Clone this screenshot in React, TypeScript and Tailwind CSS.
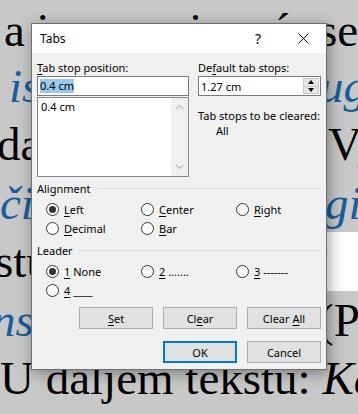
import type { ReactNode } from 'react'
import { clsx } from 'clsx'

function Radio({ checked, children }: { checked?: boolean; children: ReactNode }) {
  return (
    <div className="flex items-center h-[19px]">
      <span className="w-[13px] h-[13px] rounded-full border border-[#333] bg-white flex items-center justify-center shrink-0">
        {checked && <span className="w-[7px] h-[7px] rounded-full bg-[#333]" />}
      </span>
      <span className="ml-[5px] whitespace-pre">{children}</span>
    </div>
  )
}

function Btn({ children, primary }: { children: ReactNode; primary?: boolean }) {
  return (
    <div
      className={clsx(
        'w-[74px] h-[22px] flex items-center justify-center bg-[#e1e1e1]',
        primary ? 'border-2 border-[#0078d7]' : 'border border-[#adadad]'
      )}
    >
      <span className="whitespace-pre">{children}</span>
    </div>
  )
}

function U({ children }: { children: ReactNode }) {
  return <span className="underline decoration-1 underline-offset-[2px]">{children}</span>
}

function GroupLabel({ children }: { children: ReactNode }) {
  return (
    <div className="flex items-center h-[16px]">
      <span>{children}</span>
      <span className="flex-1 h-px bg-[#dcdcdc] ml-[6px]" />
    </div>
  )
}

export default function App() {
  return (
    <div className="relative w-[358px] h-[414px] overflow-hidden bg-[#c8c8c8]">
      {/* document text behind the dialog */}
      <div className="font-['Liberation_Serif',serif] text-[47px] leading-[58.5px] text-black whitespace-nowrap -mt-[2px]">
        <div className="flex pl-[4px] pt-[6px] h-[58.5px] leading-[52.5px]">
          <span className="w-[315px] shrink-0 overflow-hidden">a izvorne iznoć,</span>
          <span>se</span>
        </div>
        <div className="flex pl-[9px] italic text-[#155e9f]">
          <span className="w-[311px] shrink-0 overflow-hidden">isključivo kao</span>
          <span>ugo</span>
        </div>
        <div className="flex -ml-[3px]">
          <span className="w-[331px] shrink-0 overflow-hidden">da bi se u</span>
          <span>V, </span>
        </div>
        <div className="flex italic text-[#155e9f]">
          <span className="w-[325px] shrink-0 overflow-hidden">čime se</span>
          <span>gi</span>
        </div>
        <div className="flex bg-white">
          <span className="w-[300px] shrink-0 overflow-hidden bg-[#c8c8c8]">
            <span className="-ml-[5px]">stupa na snagu</span>
          </span>
        </div>
        <div className="flex -ml-[8px]">
          <span className="w-[326px] shrink-0 overflow-hidden italic text-[#155e9f]">ns akta</span>
          <span>(Pr</span>
        </div>
        <div>
          U daljem tekstu: <span className="italic">Ka</span>
        </div>
      </div>

      {/* Tabs dialog */}
      <div className="absolute left-[31px] top-[23px] w-[296px] h-[347px] flex flex-col border border-[#6f6f6f] bg-[#f0f0f0] shadow-[2px_3px_14px_rgba(0,0,0,0.4)] font-['Noto_Sans',sans-serif] text-[11px] leading-[15px] text-black">
        <div className="h-[29px] shrink-0 bg-white flex items-center">
          <span className="pl-[8px] text-[12px]">Tabs</span>
          <span className="ml-auto w-[46px] text-center text-[14px]">?</span>
          <span className="w-[45px] flex justify-center">
            <svg width="11" height="11" viewBox="0 0 11 11">
              <path d="M0.5 0.5L10.5 10.5M10.5 0.5L0.5 10.5" stroke="#000" strokeWidth="1" />
            </svg>
          </span>
        </div>

        <div className="flex-1 flex flex-col px-[5px] pt-[6px]">
          <div className="flex gap-[9px]">
            <div className="w-[152px] shrink-0">
              <div className="h-[17px] leading-[17px]">
                <U>T</U>ab stop position:
              </div>
              <div className="h-[20px] border border-[#7a7a7a] bg-white flex items-center pl-[2px]">
                <span className="bg-[#99c9ef] leading-[14px]">0.4 cm</span>
              </div>
              <div className="mt-[1px] h-[80px] border border-[#828790] bg-white flex">
                <div className="flex-1 pl-[3px] pt-[1px]">0.4 cm</div>
                <div className="w-[17px] bg-[#f0f0f0] flex flex-col items-center justify-between py-[6px]">
                  <svg width="9" height="6" viewBox="0 0 9 6">
                    <path d="M1 5L4.5 1.5L8 5" stroke="#c0c0c0" strokeWidth="1.4" fill="none" />
                  </svg>
                  <svg width="9" height="6" viewBox="0 0 9 6">
                    <path d="M1 1L4.5 4.5L8 1" stroke="#c0c0c0" strokeWidth="1.4" fill="none" />
                  </svg>
                </div>
              </div>
            </div>

            <div className="flex-1">
              <div className="h-[17px] leading-[17px]">
                De<U>f</U>ault tab stops:
              </div>
              <div className="h-[20px] border border-[#7a7a7a] bg-white flex">
                <span className="flex-1 pl-[2px] flex items-center">1.27 cm</span>
                <div className="w-[16px] my-px mr-px flex flex-col border border-[#c8c8c8] bg-[#e6e6e6]">
                  <div className="flex-1 flex items-center justify-center border-b border-[#c8c8c8]">
                    <span className="w-0 h-0 border-x-[3.5px] border-x-transparent border-b-[4px] border-b-black" />
                  </div>
                  <div className="flex-1 flex items-center justify-center">
                    <span className="w-0 h-0 border-x-[3.5px] border-x-transparent border-t-[4px] border-t-black" />
                  </div>
                </div>
              </div>
              <div className="mt-[12px]">Tab stops to be cleared:</div>
              <div className="pl-[18px]">All</div>
            </div>
          </div>

          <div className="mt-[3px]">
            <GroupLabel>Alignment</GroupLabel>
          </div>
          <div className="mt-[4px] pl-[9px] grid grid-cols-[95px_95px_1fr]">
            <Radio checked>
              <U>L</U>eft
            </Radio>
            <Radio>
              <U>C</U>enter
            </Radio>
            <Radio>
              <U>R</U>ight
            </Radio>
            <Radio>
              <U>D</U>ecimal
            </Radio>
            <Radio>
              <U>B</U>ar
            </Radio>
          </div>

          <div className="mt-[4px]">
            <GroupLabel>Leader</GroupLabel>
          </div>
          <div className="mt-[4px] pl-[9px] grid grid-cols-[95px_95px_1fr]">
            <Radio checked>
              <U>1</U> None
            </Radio>
            <Radio>
              <U>2</U> .......
            </Radio>
            <Radio>
              <U>3</U> -------
            </Radio>
            <Radio>
              <U>4</U> ____
            </Radio>
          </div>

          <div className="mt-[7px] flex justify-end gap-[10px]">
            <Btn>
              <U>S</U>et
            </Btn>
            <Btn>
              Cl<U>e</U>ar
            </Btn>
            <Btn>
              Clear <U>A</U>ll
            </Btn>
          </div>
          <div className="mt-[12px] flex justify-end gap-[10px]">
            <Btn primary>OK</Btn>
            <Btn>Cancel</Btn>
          </div>
        </div>
      </div>
    </div>
  )
}
